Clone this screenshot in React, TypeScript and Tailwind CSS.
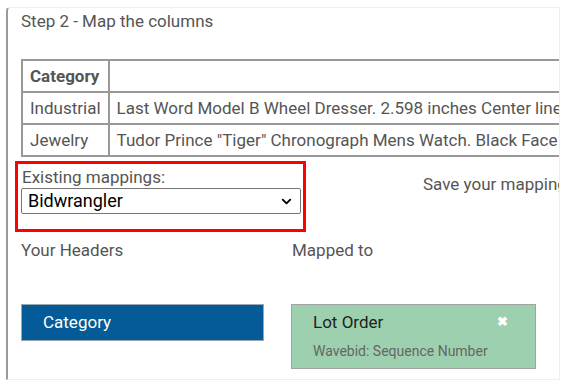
import React from "react";
import { ChevronDown } from "lucide-react";

const rows = [
  {
    category: "Industrial",
    title: "Last Word Model B Wheel Dresser. 2.598 inches Center line",
  },
  {
    category: "Jewelry",
    title: 'Tudor Prince "Tiger" Chronograph Mens Watch. Black Face',
  },
];

const App = () => {
  return (
    <div className="w-[572px] h-[389px] bg-white font-['Roboto',sans-serif] text-[#555]">
      <div className="ml-[6px] pt-[7px]">
        <div className="w-[554px] h-[373px] border border-[#eee] border-l-2 border-l-[#9a9a9a] rounded-tl-[4px] overflow-hidden pl-[13px]">
          <div className="mt-[1px] text-[17px] leading-[24px]">Step 2 - Map the columns</div>

          {/* preview table */}
          <table className="mt-[26px] border border-[#999] border-separate border-spacing-0 text-[17px] whitespace-nowrap">
            <thead>
              <tr>
                <th className="w-[89px] border border-[#999] px-[7px] py-[3px] leading-[24px] text-left font-bold">Category</th>
                <th className="border border-[#999] px-[7px] py-[3px] leading-[24px] w-[900px]"></th>
              </tr>
            </thead>
            <tbody>
              {rows.map((r) => (
                <tr key={r.category}>
                  <td className="border border-[#999] px-[7px] py-[3px] leading-[24px]">{r.category}</td>
                  <td className="border border-[#999] px-[7px] py-[3px] leading-[24px]">{r.title}</td>
                </tr>
              ))}
            </tbody>
          </table>

          <div className="flex items-start mt-[4px]">
            <div className="shrink-0 -ml-[6px] w-[291px] h-[71px] border-[3px] border-[#ff0000] pl-[4px] pt-[3px]">
              <div className="text-[17px] leading-[20px]">Existing mappings:</div>
              <div className="mt-[1px] ml-[-1px] w-[280px] h-[26px] border border-[#767676] rounded-[2px] bg-white flex items-center justify-between pl-[6px] pr-[6px]">
                <span className="text-[18px] text-black leading-[24px]">Bidwrangler</span>
                <ChevronDown size={15} strokeWidth={3} className="text-black" />
              </div>
            </div>
            <div className="shrink-0 ml-[117px] mt-[11px] text-[17px] leading-[24px] whitespace-nowrap">Save your mappings</div>
          </div>

          <div className="grid grid-cols-[271px_1fr] mt-[6px] text-[17px] leading-[24px]">
            <div>Your Headers</div>
            <div>Mapped to</div>
          </div>

          <div className="grid grid-cols-[270px_1fr] mt-[42px] items-start">
            <div className="w-[243px] h-[37px] bg-[#045b97] border border-[#9aa8b4] flex items-center pl-[21px] text-white text-[17px]">
              Category
            </div>
            <div className="w-[245px] h-[65px] bg-[#9dd0ae] border border-[#a3a3a3] pl-[21px] pr-[27px] pt-[5px]">
              <div className="flex items-center justify-between">
                <span className="text-[17px] leading-[24px] text-[#222]">Lot Order</span>
                <span className="text-white font-bold text-[13px] leading-[24px]">✖</span>
              </div>
              <div className="mt-[7px] text-[14px] leading-[20px] text-[#666]">Wavebid: Sequence Number</div>
            </div>
          </div>
        </div>
      </div>
    </div>
  );
};

export default App;
